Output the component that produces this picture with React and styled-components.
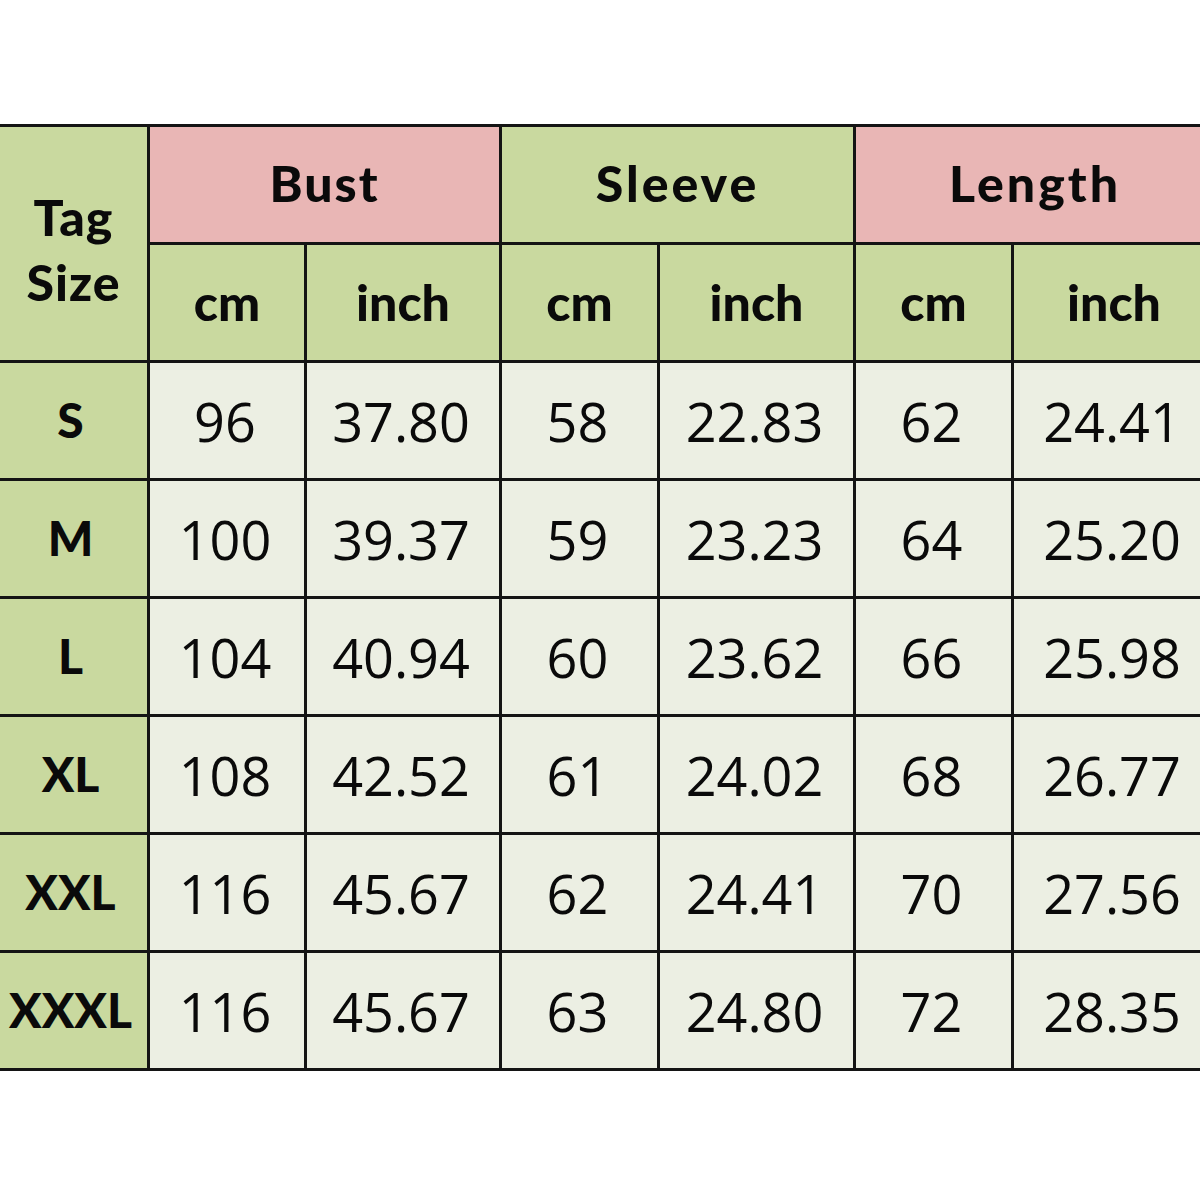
import React from "react";
import styled, { createGlobalStyle } from "styled-components";

const GlobalStyle = createGlobalStyle`
  body {
    margin: 0;
    background: #ffffff;
  }
`;

const Page = styled.div`
  width: 1200px;
  height: 1200px;
  overflow: hidden;
  padding-top: 124px;
  box-sizing: border-box;
`;

const Chart = styled.div`
  display: grid;
  grid-template-columns: 147px 154px 192px 155px 193px 155px 200px;
  grid-template-rows: repeat(8, 115px);
  gap: 3px;
  padding: 3px 0;
  background: #141414;
  width: 1230px;
`;

const Cell = styled.div`
  display: flex;
  align-items: center;
  justify-content: center;
  background: ${(p) => p.$bg};
  color: #0a0a0a;
  grid-column: ${(p) => p.$span || "auto"};
  grid-row: ${(p) => p.$rows || "auto"};
`;

const HeadCell = styled(Cell)`
  font-family: Lato, "DejaVu Sans", sans-serif;
  font-weight: 900;
  font-size: 50px;
  line-height: 1.3;
  text-align: center;
  letter-spacing: ${(p) => p.$ls || 0}px;
  padding-top: ${(p) => p.$pt || 0}px;
  padding-bottom: ${(p) => p.$pb || 0}px;
`;

const SizeCell = styled(HeadCell)`
  font-size: 48px;
  padding-right: 6px;
`;

const ValueCell = styled(Cell)`
  font-family: "Open Sans", "DejaVu Sans", sans-serif;
  font-size: 54px;
  font-weight: 400;
  padding-right: 4px;
`;

const GREEN = "#c9d99f";
const PINK = "#e9b6b5";
const PALE = "#ecefe3";

const rows = [
  ["S", "96", "37.80", "58", "22.83", "62", "24.41"],
  ["M", "100", "39.37", "59", "23.23", "64", "25.20"],
  ["L", "104", "40.94", "60", "23.62", "66", "25.98"],
  ["XL", "108", "42.52", "61", "24.02", "68", "26.77"],
  ["XXL", "116", "45.67", "62", "24.41", "70", "27.56"],
  ["XXXL", "116", "45.67", "63", "24.80", "72", "28.35"],
];

function App() {
  return (
    <>
      <GlobalStyle />
      <Page>
        <Chart>
          <HeadCell $bg={GREEN} $rows="1 / 3" $pt={12} $ls={1}>
            Tag
            <br />
            Size
          </HeadCell>
          <HeadCell $bg={PINK} $span="2 / 4" $pb={2} $ls={2}>Bust</HeadCell>
          <HeadCell $bg={GREEN} $span="4 / 6" $pb={2} $ls={3}>Sleeve</HeadCell>
          <HeadCell $bg={PINK} $span="6 / 8" $pb={2} $ls={3}>Length</HeadCell>
          {["cm", "inch", "cm", "inch", "cm", "inch"].map((u, i) => (
            <HeadCell key={i} $bg={GREEN}>
              {u}
            </HeadCell>
          ))}
          {rows.map((r) => (
            <React.Fragment key={r[0]}>
              <SizeCell $bg={GREEN}>{r[0]}</SizeCell>
              {r.slice(1).map((v, i) => (
                <ValueCell key={i} $bg={PALE}>
                  {v}
                </ValueCell>
              ))}
            </React.Fragment>
          ))}
        </Chart>
      </Page>
    </>
  );
}

export default App;
